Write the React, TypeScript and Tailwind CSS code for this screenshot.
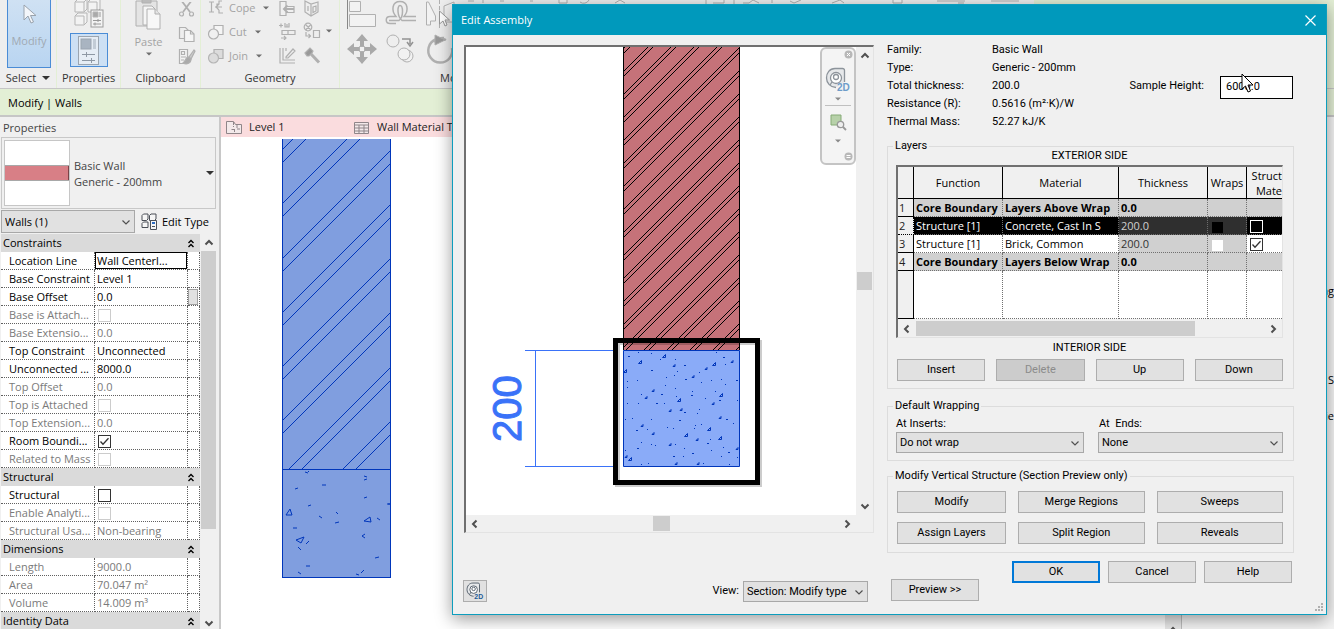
import { useId } from "react";
import type { ReactNode } from "react";
import clsx from "clsx";

type Direction = "up" | "down" | "left" | "right";

const chevrons: Record<Direction, string> = {
  up: "M1.5 6.5 5 3l3.5 3.5",
  down: "M1.5 3.5 5 7l3.5-3.5",
  left: "M6.5 1.5 3 5l3.5 3.5",
  right: "M3.5 1.5 7 5 3.5 8.5",
};

const Chevron = ({ dir, thin }: { dir: Direction; thin?: boolean }) => (
  <svg width="10" height="10" viewBox="0 0 10 10" fill="none" stroke="#505050" strokeWidth={thin ? 1.2 : 2}>
    <path d={chevrons[dir]} />
  </svg>
);

const Caret = ({ className }: { className?: string }) => (
  <svg className={clsx("shrink-0", className)} width="8" height="4" viewBox="0 0 8 4">
    <path d="M0 0h8L4 4z" fill="currentColor" />
  </svg>
);

const Check = ({ label, checked, muted, id, dark }: { label?: string; checked?: boolean; muted?: boolean; id?: string; dark?: boolean }) => (
  <span className="grid size-[13px]">
    <input
      type="checkbox"
      id={id}
      aria-label={label}
      defaultChecked={checked}
      disabled={muted}
      className={clsx(
        "col-start-1 row-start-1 size-[13px] appearance-none border",
        dark ? "border-white bg-black" : muted ? "border-[#cccccc] bg-white" : "border-[#333333] bg-white",
      )}
    />
    {checked && (
      <svg className="pointer-events-none col-start-1 row-start-1" width="13" height="13" viewBox="0 0 13 13" fill="none" stroke="#333" strokeWidth="1.3">
        <path d="M2.5 6.5 5 9.3l5.5-6" />
      </svg>
    )}
  </span>
);

const Combo = ({ value, className, id, label }: { value: string; className: string; id?: string; label?: string }) => (
  <span className={clsx("relative block", className)}>
    <select id={id} aria-label={label} className="block h-full w-full appearance-none border border-[#a8a8a8] bg-[#e1e1e1] pl-[3px] text-black">
      <option>{value}</option>
    </select>
    <span className="pointer-events-none absolute inset-y-0 right-1 flex items-center">
      <Chevron dir="down" thin />
    </span>
  </span>
);

/* ---------- ribbon ---------- */

const Icon = ({ children, size = 18 }: { children: ReactNode; size?: number }) => (
  <svg className="shrink-0" width={size} height={size} viewBox={`0 0 ${size} ${size}`} fill="none" stroke="#b0b0b0" strokeWidth="1.2">
    {children}
  </svg>
);

const RibbonGroup = ({ title, className, children }: { title: ReactNode; className: string; children: ReactNode }) => (
  <section className={clsx("flex shrink-0 flex-col border-r border-[#e3efd5]", className)}>
    <div className="flex h-[69px]">{children}</div>
    <div className="flex h-[18px] items-center justify-center gap-1.5">{title}</div>
  </section>
);

const GeometryButton = ({ name, icon }: { name: string; icon: ReactNode }) => (
  <button className="flex h-6 items-center gap-2 text-[#a3a3a3]">
    <span className="flex items-center gap-1">
      {icon}
      {name}
    </span>
    <Caret className="w-[6px] text-[#6e6e6e]" />
  </button>
);

const Ribbon = () => (
  <header className="flex h-[89px] shrink-0 overflow-hidden border-b border-[#c6c6c6] bg-[#eeeeee] text-[#333333]">
    <RibbonGroup className="w-[57px]" title={<>Select <Caret /></>}>
      <button className="ml-[7px] flex h-[68px] w-[44px] flex-col items-center border border-t-0 border-[#4a8cd6] bg-linear-to-b from-[#cfe1f3] to-[#b9d5f1] text-[#a0a9b3]">
        <svg width="16" height="22" viewBox="0 0 16 22" className="mt-[3px]">
          <path d="M3 2v15l4-4 3 7 2.500-1-3-6.500H15z" fill="#f3f6fa" stroke="#9aa3ad" />
        </svg>
        <span className="mt-2">Modify</span>
      </button>
    </RibbonGroup>

    <RibbonGroup className="w-16" title="Properties">
      <div className="flex w-full flex-col items-center gap-[4px]">
        <svg width="30" height="29" viewBox="0 0 30 29" fill="#f3f3f3" stroke="#b5b5b5">
          <path d="M1 2 4-1h9v10l-3 3H1zM14 2l3-3h9v10l-3 3h-9zM1 16l3-3h9v9l-3 3H1z" />
          <path d="M1 2h9v10M10 2l3-3M14 2h9v8M1 16h9v9" />
          <rect x="17" y="10" width="12" height="17" stroke="#9c9c9c" />
          <path d="M19 12h5v5h-5z" fill="#aaa" />
          <path d="M26 12v5M19 20.500h8M19 24h8M24 19v3M21 22.500v3" stroke="#999" />
        </svg>
        <button aria-label="Properties palette" className="flex h-[34px] w-[38px] items-center justify-center border border-[#4a8cd6] bg-[#cde0f4]">
          <svg width="21" height="31" viewBox="0 0 21 31" fill="#e6edf5" stroke="#9ba5b0">
            <rect x=".5" y="1.500" width="20" height="28" />
            <rect x="3" y="4" width="10" height="10" fill="#a9b4c1" />
            <path d="M15 4h3v10h-3z" fill="#c3ccd6" stroke="none" />
            <path d="M4 19.500h13M4 25.500h13M8.500 17v5M13.500 23v5" stroke="#8e98a4" />
          </svg>
        </button>
      </div>
    </RibbonGroup>

    <RibbonGroup className="w-20" title="Clipboard">
      <button className="ml-[14px] flex w-[27px] flex-col items-center text-[#a3a3a3]">
        <svg width="28" height="30" viewBox="0 0 28 30" fill="#e4e4e4" stroke="#b0b0b0">
          <path d="M1 1h21v25H1z" />
          <path d="M7-1h9v4H7z" fill="#bbb" />
          <path d="M8 6h9l4 4v15H8z" fill="#f5f5f5" />
          <path d="M12 9h8l5 5v15H12z" fill="#f7f7f7" />
          <path d="M20 9v5h5" />
        </svg>
        <span className="mt-1 leading-4">Paste</span>
        <Caret className="mt-[2px] w-[6px] text-[#6e6e6e]" />
      </button>
      <div className="ml-[16px] flex flex-col">
        <button aria-label="Cut to clipboard" className="h-[22px]">
          <Icon>
            <path d="M3-2 12 10M14-2 5 10" strokeWidth="1.800" />
            <circle cx="3.500" cy="12" r="2" />
            <circle cx="13.500" cy="12" r="2" />
          </Icon>
        </button>
        <button aria-label="Copy to clipboard" className="h-6">
          <Icon>
            <path d="M1.500 2.500h6l3 3v8h-9z" fill="#eee" />
            <path d="M6.500 5.500h6l3.500 3.500v7.500H6.500z" fill="#f5f5f5" />
            <path d="M12.500 5.500V9H16" />
          </Icon>
        </button>
        <button aria-label="Match type properties" className="h-6">
          <Icon>
            <path d="M1.500 1.500h8v14h-8z" fill="#f3f3f3" />
            <path d="M3.500 3.500h3v3h-3zM3 9h5M3 12h3" />
            <path d="m16 2-5 7 2 2 4-8z" fill="#ccc" />
            <path d="M10 9c-3 1-2 4-5 6 4 2 8 0 8-4z" fill="#aaa" />
          </Icon>
        </button>
      </div>
    </RibbonGroup>

    <RibbonGroup className="w-[139px]" title="Geometry">
      <div className="-mt-1 ml-[6px] flex w-[66px] flex-col items-start">
        <GeometryButton name="Cope" icon={
          <Icon><path d="M2 3h5M4.500 3v10M2 13h5M15 2h-3v3h-2v3M9 8l3-3M9 8l3 3M8 8h7M12 11v3h4" /></Icon>
        } />
        <GeometryButton name="Cut" icon={
          <Icon><path d="M7 2.500h9v9H7z" fill="#f5f5f5" /><circle cx="6.500" cy="11" r="5" fill="#f0f0f0" /></Icon>
        } />
        <GeometryButton name="Join" icon={
          <Icon><path d="M7 2.500h9v9H7z" fill="#dcdcdc" /><circle cx="6.500" cy="11" r="5" fill="#dcdcdc" stroke="#b5b5b5" /></Icon>
        } />
      </div>
      <div className="ml-[5px] grid grid-cols-[25px_23px_8px] grid-rows-[18px_26px_24px] items-center">
        <Icon>
          <path d="M2 1.500h6v5h8v6H8v3H2z" fill="#f0f0f0" />
          <path d="M16 9H6M9.500 5.500 6 9l3.500 3.500" strokeWidth="2" />
        </Icon>
        <Icon>
          <path d="M2 1 8 4l7-2v10l-7 4-6-4zM8 4v12M5 6v5M10 7l3-1v5l-3 1.500z" />
        </Icon>
        <span />
        <Icon>
          <path d="M1 3.500h4M3 1.500v4M7 1v4h2V2v3h2V1M4 8.500h13v4H4zM10 8.500v4M3 16h5M6 14l2 2-2 2" />
        </Icon>
        <Icon>
          <circle cx="5" cy="5" r="3.800" />
          <path d="M2.500 2.500 8 8M8 2.500 2.500 8M10.500 8.500h6v7h-6zM3 10v4h4M5.500 12l2 2-2 2" />
        </Icon>
        <Caret className="w-[6px] text-[#6e6e6e]" />
        <Icon>
          <path d="M2 1v15h15M5 1v12h12M8 1v3M8 10l7-8 2 2-7 7H8z" />
        </Icon>
        <Icon>
          <path d="m2 6 5-5 3 3-1 2-3 3-2 0z" fill="#999" />
          <path d="m8 7 8 8.500" strokeWidth="3" />
        </Icon>
      </div>
    </RibbonGroup>

    <section className="flex min-w-0 flex-1 flex-col">
      <svg className="h-[69px] w-full" fill="#f2f2f2" stroke="#b0b0b0">
        <path d="M7.500 0v29" stroke="#888" />
        <path d="M9.500 1.500h11v10h-11zM9.500 14.500h26v12h-26z" />
        <path d="M56 23.500h-6c-5 0-5-7 0-7h6c-5-6-4-15 4-15s9 9 4 15h12M76 20.500H62c-5-4-5-15-2-15s4 11-1 15H49" fill="none" strokeWidth="1.500" />
        <path d="M86.500 2v23h4v-4h5v-5l-7-14zM104 6l10-4v20h-10z" />
        <path d="M99.500 0v29" strokeDasharray="4 2" />
        <path d="m22 34 6 7h-4v6h6v-4l7 6-7 6v-4h-6v6h4l-6 7-6-7h4v-6h-6v4l-7-6 7-6v4h6v-6h-4z" fill="#a9a9a9" stroke="none" />
        <path d="M19.500 46.500h5v5h-5z" />
        <circle cx="53" cy="41" r="6" fill="none" />
        <circle cx="67" cy="56" r="6" />
        <circle cx="64" cy="54" r="6" />
        <path d="M62 39h8v5M67 42l3 4 3-4" fill="none" stroke="#929292" strokeWidth="1.500" />
        <path d="M106 40a12 12 0 1 0 6 8M94 42a12 12 0 0 1 10-4" fill="none" strokeWidth="2.500" />
        <path d="m95 35 10 5-10 5z" fill="#999" />
        <path d="M99.500 11v13l3.500-3 2 5 2-1-2-5h4.500z" fill="#fff" stroke="#999" />
        <path d="M128 1h6M143 0v3M160 1h4M190 1h3M219 0v3h8V0M240 2a6 6 0 0 0 9-2M275 3l5-3 5 3M366 0v4M373 3h11V0M394 0v4M403 3h6l4-3 6 3M432 0v3M450 1l4 2 7-3M492 3l8-3 4 3M553 0v3h9V0M597 1h28M618 3h6M651 1h28" />
      </svg>
      <div className="flex h-[18px] items-center pl-[100px]">Modify</div>
    </section>
    <div className="w-[300px] shrink-0 bg-[#e3efd5]" />
  </header>
);

/* ---------- properties palette ---------- */

type Property = { name: string; value?: ReactNode; check?: boolean; muted?: boolean; boxed?: boolean; more?: boolean };

const groups: { title: string; rows: Property[] }[] = [
  {
    title: "Constraints",
    rows: [
      { name: "Location Line", value: "Wall Centerl...", boxed: true },
      { name: "Base Constraint", value: "Level 1" },
      { name: "Base Offset", value: "0.0", more: true },
      { name: "Base is Attach...", check: false, muted: true },
      { name: "Base Extensio...", value: "0.0", muted: true },
      { name: "Top Constraint", value: "Unconnected" },
      { name: "Unconnected ...", value: "8000.0" },
      { name: "Top Offset", value: "0.0", muted: true },
      { name: "Top is Attached", check: false, muted: true },
      { name: "Top Extension...", value: "0.0", muted: true },
      { name: "Room Boundi...", check: true },
      { name: "Related to Mass", check: false, muted: true },
    ],
  },
  {
    title: "Structural",
    rows: [
      { name: "Structural", check: false },
      { name: "Enable Analyti...", check: false, muted: true },
      { name: "Structural Usa...", value: "Non-bearing", muted: true },
    ],
  },
  {
    title: "Dimensions",
    rows: [
      { name: "Length", value: "9000.0", muted: true },
      { name: "Area", value: "70.047 m²", muted: true },
      { name: "Volume", value: "14.009 m³", muted: true },
    ],
  },
  { title: "Identity Data", rows: [] },
];

const PropertyRow = ({ name, value, check, muted, boxed, more }: Property) => {
  const id = useId();
  return (
    <tr className={clsx("h-[18px]", muted ? "text-[#7a7a7a]" : "text-black")}>
      <td className="border-r border-b border-dotted border-[#606060] pl-2">
        {check === undefined ? name : <label htmlFor={id}>{name}</label>}
      </td>
      <td className="border-r border-b border-dotted border-[#606060]">
        {check !== undefined ? (
          <div className="pt-[2px] pl-[3px]"><Check id={id} checked={check} muted={muted} /></div>
        ) : boxed ? (
          <button className="block h-[17px] w-full border border-black pl-px text-left leading-[15px]">{value}</button>
        ) : (
          <span className="pl-[2px]">{value}</span>
        )}
      </td>
      <td className="border-r border-b border-dotted border-[#606060]">
        {more && <button aria-label={`Associate ${name}`} className="block h-4 w-[10px] border border-[#a0a0a0] bg-[#e1e1e1]" />}
      </td>
    </tr>
  );
};

const PropertiesPalette = () => (
  <aside className="flex w-[221px] shrink-0 flex-col border-r-2 border-[#c8c8c8] bg-[#f0f0f0] pl-px leading-4">
    <h2 className="flex h-5 shrink-0 items-center pt-px pl-[2px] text-[#444444]">Properties</h2>
    <button className="mr-[3px] flex h-[72px] shrink-0 items-center border border-[#c8c8c8] p-[2px] text-left text-[#444444]">
      <svg width="66" height="66" viewBox="0 0 66 66">
        <rect x=".5" y=".5" width="65" height="65" fill="#fff" stroke="#c6c6c6" />
        <path d="M1 25h64v15H1z" fill="#d87f86" />
        <path d="M1 25.500h64M1 40.500h64" stroke="#a8a8a8" />
        <path d="M64.500 26v14" stroke="#7a4347" />
      </svg>
      <span className="ml-1 flex-1 pt-[2px]">Basic Wall<br />Generic - 200mm</span>
      <Caret className="mr-[-1px] text-[#333333]" />
    </button>
    <div className="flex h-[25px] shrink-0 items-center">
      <Combo label="Element filter" value="Walls (1)" className="h-[23px] w-[134px]" />
      <button className="ml-[6px] flex items-center gap-1 text-black">
        <svg width="17" height="17" viewBox="0 0 17 17" fill="#f6f6f6" stroke="#4a4f57">
          <path d="M1 2.500 2.500 1H7v5L5.500 7.500H1zM8.500 2.500 10 1h5v5l-1.500 1.500h-5zM1 10.500 2.500 9H7v5.500H1z" />
          <path d="M9.500 7.500h6v9h-6z" />
          <path d="M11 9h3v2h-3z" fill="#2d6cc0" stroke="none" />
          <path d="M11 13.500h3" />
        </svg>
        Edit Type
      </button>
    </div>
    <div className="flex min-h-0 flex-1 overflow-hidden">
      <div className="min-w-0 flex-1 overflow-hidden">
        <table className="w-full table-fixed border-separate border-spacing-0 bg-white">
          <colgroup>
            <col />
            <col className="w-[93px]" />
            <col className="w-3" />
          </colgroup>
          {groups.map((group) => (
            <tbody key={group.title} className="whitespace-nowrap">
              <tr className="h-[18px]">
                <th colSpan={3} className="bg-[#dadada] text-left font-normal text-black">
                  <span className="flex items-center justify-between pr-[5px] pl-[2px]">
                    {group.title}
                    <svg width="8" height="9" viewBox="0 0 8 9" fill="none" stroke="#000" strokeWidth="1.400">
                      <path d="M1.500 4 4 1.500 6.500 4M1.500 8 4 5.500 6.500 8" />
                    </svg>
                  </span>
                </th>
              </tr>
              {group.rows.map((row) => <PropertyRow key={row.name} {...row} />)}
            </tbody>
          ))}
        </table>
      </div>
      <div className="mr-[3px] ml-px flex w-[15px] flex-col items-center bg-[#f0f0f0]">
        <span className="flex h-[17px] items-center"><Chevron dir="up" /></span>
        <div className="h-[278px] w-full bg-[#cdcdcd]" />
        <span className="mt-auto flex h-[13px] items-center"><Chevron dir="down" /></span>
      </div>
    </div>
  </aside>
);

/* ---------- drawing area ---------- */

const wallMarks =
  "M4 376 8 370l2 6zM82 382l6-4 1 5zM14 401l8-3-3 6zM23 333l3 1M26 333l1-1M13 350l3-1M40 346h4M82 337l3 1M82 341l3-1M82 359l3-1M105 365h4M107 364v2M26 367l3-1M37 377l3 2M54 373l2 2M53 384l4-1M95 379l3 2M11 389h4M24 405l3-3M16 408l3 3M83 395l-3 2 3 2M93 419l4-1M24 427h4M16 433l3 2M79 434l3-3M74 435l3 1";

const WallSection = () => (
  <svg className="mt-[2px] ml-[61px] block" width="110" height="439" fill="none" stroke="#0036bb" shapeRendering="crispEdges">
    <clipPath id="wall-brick"><path d="M0 0h109v330H0z" /></clipPath>
    <path d="M0 0h109v438H0z" fill="#809edf" stroke="none" />
    <g clipPath="url(#wall-brick)">
      {[11, 65, 120, 174, 228, 282, 337, 391].map((y) => (
        <path key={y} d={`M0 ${y} l109 -109 M0 ${y + 13} l109 -109`} />
      ))}
    </g>
    <path d="M.5 0v438h108V0M0 330.500h109" />
    <path d={wallMarks} shapeRendering="auto" />
  </svg>
);

const Workspace = () => (
  <main className="flex min-w-0 flex-1 bg-white">
    <div className="min-w-0 flex-1">
      <nav className="flex h-5 items-center bg-[#fadcde] pt-px text-[#222222]">
        <a href="#level-1" className="flex w-[128px] items-center gap-[7px] pl-[5px]">
          <svg width="16" height="15" viewBox="0 0 16 15" fill="#f3e9ea" stroke="#8f8589">
            <path d="M.5 1.500h7l2 3h6v9H.5z" />
            <path d="M7.500 2v5M5.500 9.500h3M8.500 9v5M11 5v4h4" strokeDasharray="3 1" />
          </svg>
          Level 1
        </a>
        <a href="#wall-material" className="flex items-center gap-2 pl-[5px] whitespace-nowrap">
          <svg width="15" height="12" viewBox="0 0 15 12" fill="#f3e9ea" stroke="#8f8589">
            <path d="M.5.500h14v11H.5z" />
            <path d="M0 3h15M0 6h15M0 9h15M5 3v9M10 3v9" />
          </svg>
          Wall Material Takeoff
        </a>
      </nav>
      <WallSection />
    </div>
    <div className="flex w-[17px] flex-col items-center justify-end border-r border-[#bdbdbd] bg-[#e8e8e8]">
      <span className="h-1 overflow-hidden"><Chevron dir="up" /></span>
    </div>
    <aside className="w-[152px] bg-[#f4f4f4] pt-[165px] text-right text-black">
      <p className="leading-[18px]">Tag</p>
      <p className="mt-[71px] leading-[18px]">S</p>
      <p className="mt-[18px] leading-[18px]">Vie</p>
    </aside>
  </main>
);

/* ---------- edit assembly dialog ---------- */

const aggregate = [
  [41, 6], [51, 15], [70, 26], [91, 14], [83, 18], [109, 11], [17, 12], [30, 40], [23, 47], [56, 50], [47, 60], [58, 59], [98, 45], [90, 53],
  [97, 67], [86, 79], [19, 75], [30, 83], [63, 85], [74, 89], [47, 94], [97, 88], [114, 98], [3, 106], [7, 109], [53, 113], [75, 113], [2, 21],
];

const specks = [
  [5, 6], [15, 2], [28, 3], [37, 9], [28, 20], [14, 30], [4, 31], [52, 9], [61, 15], [54, 21], [51, 25], [43, 27], [62, 29], [76, 22], [78, 32],
  [93, 2], [100, 7], [102, 14], [88, 30], [98, 29], [113, 30], [102, 34], [4, 37], [18, 44], [38, 44], [42, 35], [52, 38], [69, 41], [68, 45],
  [53, 46], [82, 48], [92, 41], [96, 50], [114, 50], [4, 53], [15, 53], [33, 53], [41, 53], [76, 59], [74, 63], [61, 62], [2, 69], [9, 68],
  [28, 69], [13, 80], [24, 79], [44, 77], [50, 78], [56, 70], [72, 75], [78, 74], [71, 78], [103, 69], [110, 73], [18, 92], [28, 94], [14, 98],
  [32, 95], [52, 94], [61, 98], [84, 93], [87, 89], [88, 100], [100, 97], [105, 102], [98, 106], [114, 107], [60, 106], [69, 103], [80, 113],
  [18, 114], [25, 113], [50, 106], [106, 114], [2, 100],
];

const PreviewDrawing = () => (
  <svg className="block h-full w-full">
    <g transform="translate(157 0)">
      <clipPath id="preview-brick"><path d="M0 0h117v303H0z" /></clipPath>
      <path d="M0 0h117v303H0z" fill="#c57279" />
      <g clipPath="url(#preview-brick)" stroke="#000" shapeRendering="crispEdges">
        {Array.from({ length: 19 }, (_, k) => (
          <path key={k} d={`M0 ${2 + 23 * k} l117 -117 M0 ${7 + 23 * k} l117 -117`} />
        ))}
      </g>
      <path d="M.5 0v303M116.500 0v303" stroke="#000" />
      <path d="M.5 303.500h116v116H.500z" fill="#8aabf8" stroke="#0036bb" />
      <g transform="translate(0 303)" stroke="#0036bb" fill="none">
        {aggregate.map(([x, y], i) => (
          <path key={i} d={i % 3 ? `M${x - 1} ${y + 1.5} l2 -2 v2z` : `M${x - 1.5} ${y + 1.5} l3 -3 v3z`} />
        ))}
        {specks.map(([x, y], i) => <path key={i} d={i % 4 ? `M${x} ${y + 0.5} h1` : `M${x} ${y + 0.5} h2`} />)}
      </g>
    </g>
    <path d="M59 303.500h90M59 419.500h90M69.500 303v116" stroke="#3a72f8" fill="none" />
    <text transform="translate(55 395) rotate(-90)" fontSize="40" fill="#3a72f8" stroke="#3a72f8" className="font-['Liberation_Sans',sans-serif]">200</text>
    <path d="M151.500 295.500h142v142h-142z" fill="none" stroke="#000" strokeOpacity=".2" strokeWidth="5" />
    <path d="M149.500 293.500h142v142h-142z" fill="none" stroke="#000" strokeWidth="5" />
  </svg>
);

const SteeringWheel = ({ size, ink, accent }: { size: number; ink: string; accent: string }) => (
  <svg width={size} height={size} viewBox="0 0 26 26" fill="none" stroke={ink} strokeWidth="1.300">
    <path d="M19.500 15V3.500c0-1.200-.8-2-2-2H10C4.500 1.500 1.500 6 1.500 11s4 9.500 9.500 9.500" fill="#e6e8ea" />
    <circle cx="11" cy="11" r="5.500" fill="#fff" />
    <circle cx="11" cy="10" r="2.500" />
    <path d="m7 15-2 3" />
    <text x="12" y="24" fontSize="10" fontWeight="700" fill={accent} stroke="none" className="font-['Liberation_Sans',sans-serif]">2D</text>
  </svg>
);

const NavigationBar = () => (
  <div className="absolute top-0 right-0 flex h-[118px] w-[36px] flex-col items-center rounded-md border-2 border-[#c4c4c4] bg-[#f4f4f4] text-[#8a8a8a]">
    <button aria-label="Close navigation bar" className="mt-px mr-px self-end">
      <svg width="9" height="9" viewBox="0 0 9 9"><circle cx="4.500" cy="4.500" r="4" fill="#b8b8b8" /><path d="m3 3 3 3M6 3 3 6" stroke="#fff" /></svg>
    </button>
    <button aria-label="Steering wheel" className="mt-2"><SteeringWheel size={26} ink="#8d949b" accent="#6e9cc9" /></button>
    <Caret className="mt-1 w-[6px]" />
    <hr className="mt-1 w-[26px] border-[#c0c0c0]" />
    <button aria-label="Zoom region" className="mt-2">
      <svg width="17" height="17" viewBox="0 0 17 17">
        <path d="M1 1h10v10H1z" fill="#b7d1a9" stroke="#86ab77" />
        <circle cx="10.500" cy="10.500" r="3.200" fill="#eee" stroke="#999" strokeWidth="1.300" />
        <path d="m13 13 3 3" stroke="#999" strokeWidth="1.800" />
      </svg>
    </button>
    <Caret className="mt-2 w-[6px]" />
    <svg className="mt-auto mr-px mb-[2px] self-end" width="9" height="9" viewBox="0 0 9 9"><circle cx="4.500" cy="4.500" r="4" fill="#b8b8b8" /><path d="M2.500 3.500h4M2.500 5.500h4" stroke="#fff" /></svg>
  </div>
);

const Preview = () => (
  <div className="mt-1 grid min-h-0 flex-1 grid-cols-[1fr_17px] grid-rows-[1fr_17px] border-t-2 border-r border-b border-l-2 border-t-[#707070] border-r-[#e3e3e3] border-b-[#e3e3e3] border-l-[#707070]">
    <div className="relative overflow-hidden bg-white">
      <PreviewDrawing />
      <NavigationBar />
    </div>
    <div className="flex flex-col items-center justify-between py-1">
      <Chevron dir="up" />
      <div className="h-[18px] w-[15px] bg-[#cdcdcd]" />
      <Chevron dir="down" />
    </div>
    <div className="flex items-center justify-between px-1">
      <Chevron dir="left" />
      <div className="h-[15px] w-[17px] bg-[#cdcdcd]" />
      <Chevron dir="right" />
    </div>
  </div>
);

const PushButton = ({ children, className, primary, disabled }: { children: ReactNode; className?: string; primary?: boolean; disabled?: boolean }) => (
  <button
    disabled={disabled}
    className={clsx(
      "h-[22px] text-center",
      primary ? "border-2 border-[#0078d7]" : "border border-[#adadad]",
      disabled ? "bg-[#cccccc] text-[#8b8b8b]" : "bg-[#e1e1e1] text-black",
      className,
    )}
  >
    {children}
  </button>
);

const Group = ({ title, className, children }: { title: string; className: string; children: ReactNode }) => (
  <fieldset className={clsx("min-w-0 border border-[#dcdcdc]", className)}>
    <legend className="-ml-[3px] h-2 px-[2px] leading-2">{title}</legend>
    {children}
  </fieldset>
);

const facts = [
  ["Family:", "Basic Wall"],
  ["Type:", "Generic - 200mm"],
  ["Total thickness:", "200.0"],
  ["Resistance (R):", "0.5616 (m²·K)/W"],
  ["Thermal Mass:", "52.27 kJ/K"],
];

const layers = [
  { fn: "Core Boundary", material: "Layers Above Wrap", thickness: "0.0", core: true },
  { fn: "Structure [1]", material: "Concrete, Cast In S", thickness: "200.0", selected: true },
  { fn: "Structure [1]", material: "Brick, Common", thickness: "200.0", structural: true },
  { fn: "Core Boundary", material: "Layers Below Wrap", thickness: "0.0", core: true },
];

const headCell = "border-b border-black bg-[#f0f0f0] font-normal";
const cell = "border-r border-b border-dotted border-[#707070] pl-[2px] whitespace-nowrap";

const LayerTable = () => (
  <div className="overflow-hidden border-t-2 border-r border-b border-l-2 border-t-[#707070] border-r-[#e3e3e3] border-b-[#e3e3e3] border-l-[#707070] font-['Open_Sans',sans-serif] leading-4 text-black">
    <table className="w-full table-fixed border-separate border-spacing-0 bg-white">
      <colgroup>
        <col className="w-4" />
        <col className="w-[89px]" />
        <col className="w-[116px]" />
        <col className="w-[89px]" />
        <col className="w-[39px]" />
        <col />
      </colgroup>
      <thead>
        <tr className="h-8">
          <th className={clsx(headCell, "border-r")} />
          <th className={clsx(headCell, "border-r")}>Function</th>
          <th className={clsx(headCell, "border-r")}>Material</th>
          <th className={clsx(headCell, "border-r")}>Thickness</th>
          <th className={clsx(headCell, "border-r")}>Wraps</th>
          <th className={clsx(headCell, "text-right leading-[15px]")}>Struct<br />Mate</th>
        </tr>
      </thead>
      <tbody>
        {layers.map((layer, i) => (
          <tr
            key={i}
            className={clsx("h-[18px]", layer.core && "bg-[#d0d0d0] font-bold", layer.selected && "bg-black text-white")}
          >
            <th className={clsx("border-r border-b border-black bg-[#f0f0f0] pl-px text-left font-normal text-[#222222]", layer.selected && "border-dotted")}>{i + 1}</th>
            <td className={cell}>{layer.fn}</td>
            <td className={cell}>{layer.material}</td>
            <td className={clsx(cell, layer.selected ? "bg-[#2f2f2f] text-[#d0d0d0]" : !layer.core && "bg-[#d0d0d0] text-[#333333]")}>{layer.thickness}</td>
            <td className={clsx(cell, layer.selected ? "bg-[#2f2f2f]" : "bg-[#d0d0d0]")}>
              {!layer.core && (
                <input
                  type="checkbox"
                  aria-label={`Wraps, layer ${i + 1}`}
                  disabled
                  className={clsx("mt-[3px] ml-[2px] block size-[11px] appearance-none", layer.selected ? "bg-black" : "bg-white")}
                />
              )}
            </td>
            <td className="border-b border-dotted border-[#707070] pl-[3px]">
              {!layer.core && (
                <div className="pt-[2px]">
                  <Check label={`Structural material, layer ${i + 1}`} checked={layer.structural} dark={layer.selected} />
                </div>
              )}
            </td>
          </tr>
        ))}
        <tr className="h-12">
          <th className="border-r border-b border-black bg-[#f0f0f0]" />
          <td className={cell} />
          <td className={cell} />
          <td className={cell} />
          <td className={cell} />
          <td className="border-b border-dotted border-[#707070]" />
        </tr>
      </tbody>
    </table>
    <div className="flex items-center gap-1 bg-[#f0f0f0] px-1 pt-[2px] pb-px">
      <Chevron dir="left" />
      <div className="h-[15px] w-[279px] bg-[#cdcdcd]" />
      <span className="ml-auto"><Chevron dir="right" /></span>
    </div>
  </div>
);

const EditAssembly = () => (
  <div
    role="dialog"
    aria-label="Edit Assembly"
    className="absolute top-1 right-[7px] bottom-[14px] left-[452px] flex flex-col border border-[#0d9dbd] bg-[#f0f0f0] font-['Roboto',sans-serif] text-[11px] leading-[18px] text-black shadow-[0_4px_16px_rgba(0,0,0,0.4)]"
  >
    <div className="flex h-[30px] shrink-0 items-center justify-between bg-[#0099bc] pr-[10px] pl-2 font-['Open_Sans',sans-serif] text-white">
      <h1>Edit Assembly</h1>
      <button aria-label="Close">
        <svg width="11" height="11" viewBox="0 0 11 11" stroke="#fff" strokeWidth="1.200"><path d="m.5.500 10 10M10.500.500l-10 10" /></svg>
      </button>
    </div>

    <div className="flex min-h-0 flex-1 gap-[13px] pt-[6px] pr-8 pl-[11px]">
      <div className="flex min-w-0 flex-1 flex-col">
        <Preview />
        <div className="mt-[46px] mb-3 flex h-[23px] items-center">
          <button aria-label="Show steering wheel" className="-ml-px flex h-[22px] w-6 items-center justify-center border border-[#adadad] bg-[#e1e1e1]">
            <SteeringWheel size={18} ink="#4d5864" accent="#1c5a96" />
          </button>
          <label htmlFor="view" className="mr-1 ml-auto">View:</label>
          <Combo id="view" value="Section: Modify type" className="mt-[2px] mr-[6px] h-[21px] w-[125px]" />
        </div>
      </div>

      <div className="w-[407px] shrink-0">
        <div className="flex justify-between pr-px">
          <dl className="grid h-[90px] grid-cols-[105px_auto]">
            {facts.map(([name, value]) => (
              <div key={name} className="contents">
                <dt>{name}</dt>
                <dd>{value}</dd>
              </div>
            ))}
          </dl>
          <div className="mt-[35px] flex h-[23px] items-start gap-4">
            <label htmlFor="sample-height" className="pt-px">Sample Height:</label>
            <div className="relative">
              <input id="sample-height" defaultValue="6000.0" className="block h-[23px] w-[73px] border border-black bg-white pb-[2px] pl-[5px]" />
              <svg className="pointer-events-none absolute -top-[3px] left-[21px]" width="13" height="20" viewBox="0 0 13 20">
                <path d="M1 1v15l3.500-3 2.500 6 2.500-1-2.500-6H12z" fill="#fff" stroke="#000" />
              </svg>
            </div>
          </div>
        </div>

        <Group title="Layers" className="mt-[11px] pr-[10px] pb-[7px] pl-2">
          <p className="mb-[3px] text-center leading-3">EXTERIOR SIDE</p>
          <LayerTable />
          <p className="mt-1 mb-[5px] text-center leading-3">INTERIOR SIDE</p>
          <div className="grid grid-cols-4 gap-[11px] pl-px">
            <PushButton>Insert</PushButton>
            <PushButton disabled>Delete</PushButton>
            <PushButton>Up</PushButton>
            <PushButton>Down</PushButton>
          </div>
        </Group>

        <Group title="Default Wrapping" className="mt-[13px] pr-[10px] pb-[7px] pl-2">
          <div className="mt-[5px] grid grid-cols-[188px_1fr] gap-x-[14px]">
            <label htmlFor="inserts" className="leading-[17px]">At Inserts:</label>
            <label htmlFor="ends" className="pl-px leading-[17px]">At&nbsp; Ends:</label>
            <Combo id="inserts" value="Do not wrap" className="h-[21px]" />
            <Combo id="ends" value="None" className="h-[21px]" />
          </div>
        </Group>

        <Group title="Modify Vertical Structure (Section Preview only)" className="mt-[11px] pr-[10px] pb-2 pl-2">
          <div className="mt-[11px] grid grid-cols-[109px_1fr_1fr] gap-x-3 gap-y-[9px] pl-px">
            <PushButton>Modify</PushButton>
            <PushButton>Merge Regions</PushButton>
            <PushButton>Sweeps</PushButton>
            <PushButton>Assign Layers</PushButton>
            <PushButton>Split Region</PushButton>
            <PushButton>Reveals</PushButton>
          </div>
        </Group>

        <div className="mt-2 flex items-start gap-2 pr-[2px] pl-1">
          <PushButton className="mt-[18px] mr-auto w-[88px]">Preview &gt;&gt;</PushButton>
          <PushButton primary className="w-[88px]">OK</PushButton>
          <PushButton className="w-[88px]">Cancel</PushButton>
          <PushButton className="w-[88px]">Help</PushButton>
        </div>
      </div>
    </div>

    <svg className="absolute right-[2px] bottom-[2px]" width="9" height="9" viewBox="0 0 9 9" fill="#b0b0b0">
      <path d="M6 0h2v2H6zM3 3h2v2H3zM6 3h2v2H6zM0 6h2v2H0zM3 6h2v2H3zM6 6h2v2H6z" />
    </svg>
  </div>
);

export default function App() {
  return (
    <div className="relative flex h-screen flex-col overflow-hidden bg-[#f0f0f0] font-['Open_Sans',sans-serif] text-[11px]">
      <Ribbon />
      <div className="flex h-7 shrink-0 items-center border-b-2 border-[#c6c6c6] bg-[#e3efd5] pt-[2px] pl-2 text-black">Modify | Walls</div>
      <div className="flex min-h-0 flex-1">
        <PropertiesPalette />
        <Workspace />
      </div>
      <EditAssembly />
    </div>
  );
}
